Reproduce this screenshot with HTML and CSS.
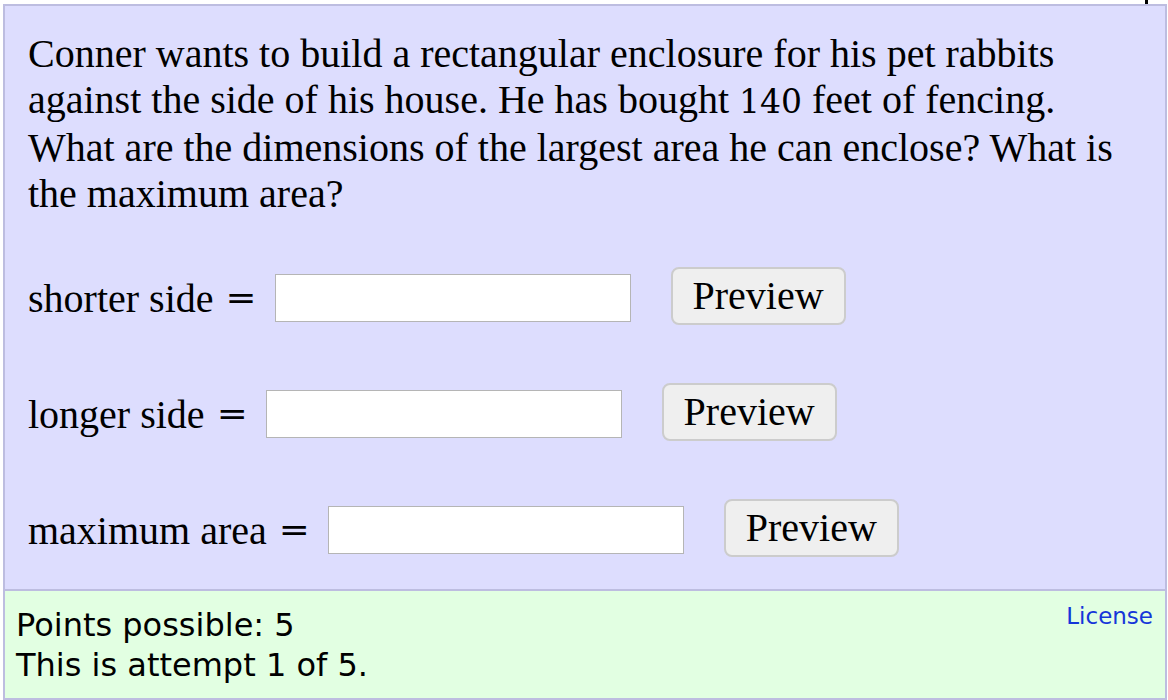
FILE: index.html
```html
<!DOCTYPE html>
<html>
<head>
<meta charset="utf-8">
<link rel="stylesheet" href="styles.css">
</head>
<body>
<div class="tick"></div>
<div class="question">
  <p class="prompt">Conner wants to build a rectangular enclosure for his pet rabbits against the side of his house. He has bought <span class="num">140</span> feet of fencing. What are the dimensions of the largest area he can enclose? What is the maximum area?</p>
  <div class="row r1">
    <span class="label">shorter side</span><span class="eq">=</span>
    <input class="answer" type="text">
    <button class="preview">Preview</button>
  </div>
  <div class="row r2">
    <span class="label">longer side</span><span class="eq">=</span>
    <input class="answer" type="text">
    <button class="preview">Preview</button>
  </div>
  <div class="row r3">
    <span class="label">maximum area</span><span class="eq">=</span>
    <input class="answer" type="text">
    <button class="preview">Preview</button>
  </div>
</div>
<div class="info">
  <div class="points">Points possible: 5<br>This is attempt 1 of 5.</div>
  <a class="license" href="#">License</a>
</div>
</body>
</html>
```

FILE: styles.css
```css
html, body {
  margin: 0;
  padding: 0;
  background: #ffffff;
}
body {
  position: relative;
  width: 1168px;
  height: 700px;
  overflow: hidden;
  padding-top: 4px;
  padding-left: 3px;
  box-sizing: border-box;
}
.tick {
  position: absolute;
  left: 1145px;
  top: 0;
  width: 3px;
  height: 4px;
  background: #000;
}
.question {
  width: 1164px;
  height: 585px;
  box-sizing: border-box;
  background: #ddddfe;
  border: 2px solid #bdbde0;
  border-bottom: none;
  padding: 25px 18px 0 23px;
  font-family: "Liberation Serif", "Times New Roman", serif;
  color: #000;
}
.prompt {
  margin: 0;
  font-size: 40px;
  line-height: 46px;
}
.num {
  font-family: "DejaVu Serif", "Liberation Serif", serif;
  font-size: 33px;
}
.row {
  display: flex;
  align-items: center;
  height: 58px;
  font-size: 40px;
}
.r1 { margin-top: 52px; }
.r2, .r3 { margin-top: 58px; }
.eq {
  margin-left: 12px;
  font-family: "DejaVu Sans", sans-serif;
  font-size: 37px;
  font-weight: normal;
  line-height: 1;
  transform: scaleY(0.85);
}
.answer {
  margin: 0 0 0 18px;
  width: 356px;
  height: 48px;
  box-sizing: border-box;
  border: 1px solid #b5b5b5;
  background: #fff;
  padding: 0;
}
.preview {
  margin-left: 40px;
  margin-bottom: 5px;
  height: 58px;
  width: 175px;
  box-sizing: border-box;
  border: 2px solid #cccccc;
  border-radius: 8px;
  background: #efefef;
  font-family: "Liberation Serif", "Times New Roman", serif;
  font-size: 40px;
  color: #000;
  padding: 0;
}
.info {
  position: relative;
  width: 1164px;
  height: 111px;
  box-sizing: border-box;
  background: #e2ffe2;
  border: 2px solid #bdbde0;
  padding: 14px 12px 0 11px;
  font-family: "DejaVu Sans", Verdana, sans-serif;
}
.points {
  font-size: 32px;
  line-height: 40px;
  color: #000;
}
.license {
  position: absolute;
  right: 12px;
  top: 12px;
  font-size: 23px;
  color: #1536d9;
  text-decoration: none;
}
```
